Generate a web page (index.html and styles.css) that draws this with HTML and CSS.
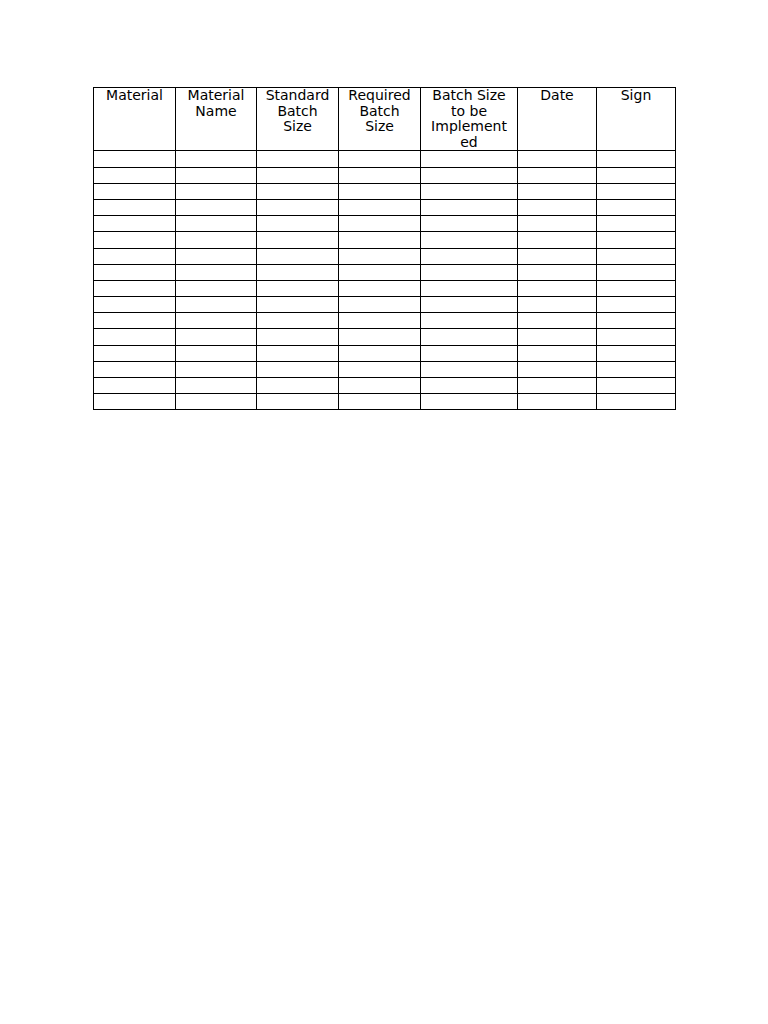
FILE: index.html
```html
<!DOCTYPE html>
<html>
<head>
<meta charset="utf-8">
<link rel="stylesheet" href="styles.css">
</head>
<body>
<table class="sheet">
<colgroup>
<col class="c1"><col class="c2"><col class="c3"><col class="c4"><col class="c5"><col class="c6"><col class="c7">
</colgroup>
<thead>
<tr><th>Material</th><th>Material Name</th><th>Standard Batch Size</th><th>Required Batch Size</th><th class="narrow">Batch Size to be Implemented</th><th>Date</th><th>Sign</th></tr>
</thead>
<tbody>
<tr><td></td><td></td><td></td><td></td><td></td><td></td><td></td></tr>
<tr><td></td><td></td><td></td><td></td><td></td><td></td><td></td></tr>
<tr><td></td><td></td><td></td><td></td><td></td><td></td><td></td></tr>
<tr><td></td><td></td><td></td><td></td><td></td><td></td><td></td></tr>
<tr><td></td><td></td><td></td><td></td><td></td><td></td><td></td></tr>
<tr><td></td><td></td><td></td><td></td><td></td><td></td><td></td></tr>
<tr><td></td><td></td><td></td><td></td><td></td><td></td><td></td></tr>
<tr><td></td><td></td><td></td><td></td><td></td><td></td><td></td></tr>
<tr><td></td><td></td><td></td><td></td><td></td><td></td><td></td></tr>
<tr><td></td><td></td><td></td><td></td><td></td><td></td><td></td></tr>
<tr><td></td><td></td><td></td><td></td><td></td><td></td><td></td></tr>
<tr><td></td><td></td><td></td><td></td><td></td><td></td><td></td></tr>
<tr><td></td><td></td><td></td><td></td><td></td><td></td><td></td></tr>
<tr><td></td><td></td><td></td><td></td><td></td><td></td><td></td></tr>
<tr><td></td><td></td><td></td><td></td><td></td><td></td><td></td></tr>
<tr><td></td><td></td><td></td><td></td><td></td><td></td><td></td></tr>
</tbody>
</table>
</body>
</html>
```
FILE: styles.css
```css
html, body {
  margin: 0;
  padding: 0;
  background: #fff;
}
body {
  padding: 87px 0 0 93px;
  font-family: "DejaVu Sans", sans-serif;
  font-size: 14px;
  color: #000;
}
.sheet {
  border-collapse: collapse;
  table-layout: fixed;
  width: 582px;
}
.c1 { width: 82px; }
.c2 { width: 81px; }
.c3 { width: 82px; }
.c4 { width: 82px; }
.c5 { width: 97px; }
.c6 { width: 79px; }
.c7 { width: 79px; }
.sheet th, .sheet td {
  border: 1px solid #000;
  padding: 0;
}
.sheet th {
  height: 61px;
  vertical-align: top;
  font-weight: normal;
  text-align: center;
  line-height: 15.6px;
  padding: 0 5px 0;
  overflow-wrap: anywhere;
}
.sheet th.narrow {
  padding: 0 8px 0;
}
.sheet td {
  height: 15.2px;
}
```
